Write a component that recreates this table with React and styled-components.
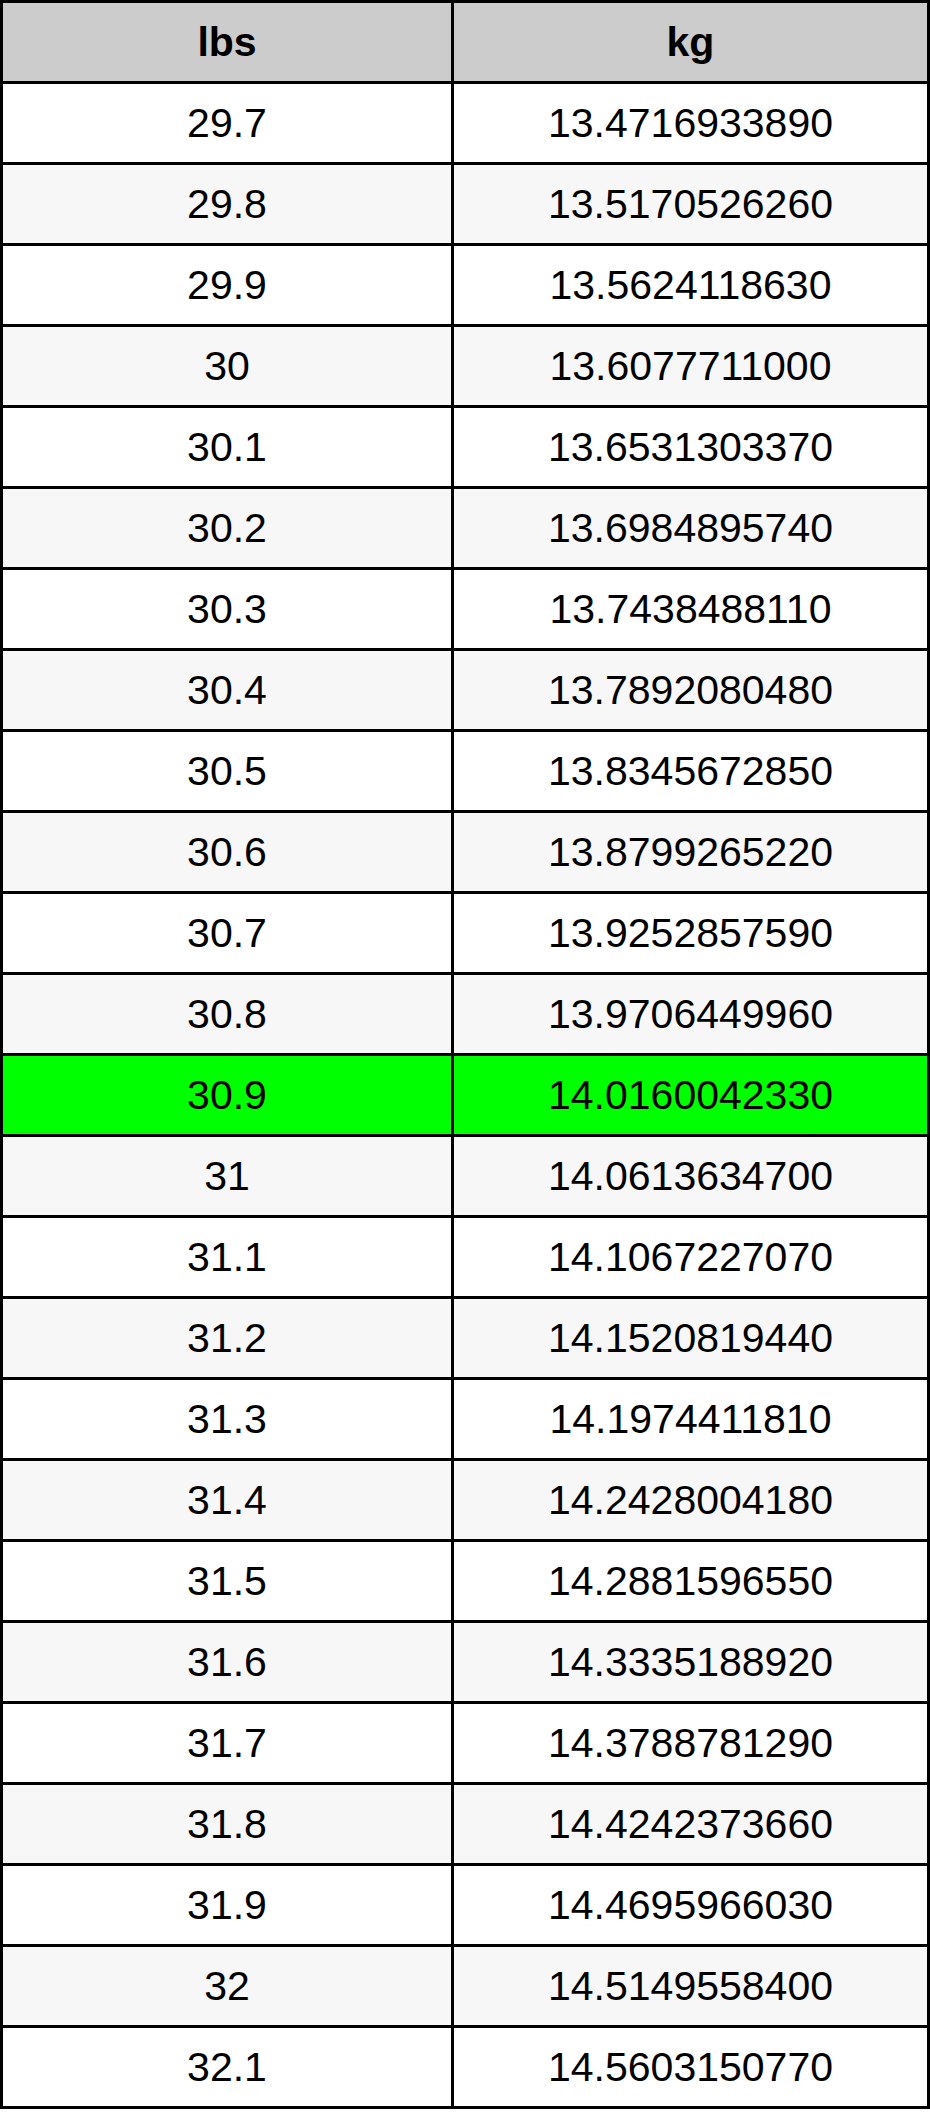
import React from "react";
import styled, { createGlobalStyle } from "styled-components";

const GlobalStyle = createGlobalStyle`
  html, body {
    margin: 0;
    padding: 0;
    background: #fff;
  }
  body {
    font-family: "Liberation Sans", Arial, sans-serif;
  }
`;

const Table = styled.table`
  width: 930px;
  table-layout: fixed;
  border-collapse: separate;
  border-spacing: 0;
  border-top: 3px solid #000;
  border-left: 3px solid #000;
`;

const HeadCell = styled.th`
  width: ${(props) => props.$width}px;
  height: 78px;
  padding: 0;
  background-color: #cccccc;
  border-right: 3px solid #000;
  border-bottom: 3px solid #000;
  font-size: 41px;
  font-weight: bold;
  color: #000;
  text-align: center;
  vertical-align: middle;
`;

const Row = styled.tr`
  background-color: ${(props) =>
    props.$active ? "#00ff00" : props.$odd ? "#f7f7f7" : "#ffffff"};
`;

const Cell = styled.td`
  height: 78px;
  padding: 0;
  border-right: 3px solid #000;
  border-bottom: 3px solid #000;
  font-size: 41px;
  color: #000;
  text-align: center;
  vertical-align: middle;
`;

const rows = [
  ["29.7", "13.4716933890"],
  ["29.8", "13.5170526260"],
  ["29.9", "13.5624118630"],
  ["30", "13.6077711000"],
  ["30.1", "13.6531303370"],
  ["30.2", "13.6984895740"],
  ["30.3", "13.7438488110"],
  ["30.4", "13.7892080480"],
  ["30.5", "13.8345672850"],
  ["30.6", "13.8799265220"],
  ["30.7", "13.9252857590"],
  ["30.8", "13.9706449960"],
  ["30.9", "14.0160042330"],
  ["31", "14.0613634700"],
  ["31.1", "14.1067227070"],
  ["31.2", "14.1520819440"],
  ["31.3", "14.1974411810"],
  ["31.4", "14.2428004180"],
  ["31.5", "14.2881596550"],
  ["31.6", "14.3335188920"],
  ["31.7", "14.3788781290"],
  ["31.8", "14.4242373660"],
  ["31.9", "14.4695966030"],
  ["32", "14.5149558400"],
  ["32.1", "14.5603150770"],
];

export default function App() {
  return (
    <>
      <GlobalStyle />
      <Table>
        <thead>
          <tr>
            <HeadCell $width={448}>lbs</HeadCell>
            <HeadCell $width={473}>kg</HeadCell>
          </tr>
        </thead>
        <tbody>
          {rows.map(([lbs, kg], i) => (
            <Row key={lbs} $odd={i % 2 === 1} $active={lbs === "30.9"}>
              <Cell>{lbs}</Cell>
              <Cell>{kg}</Cell>
            </Row>
          ))}
        </tbody>
      </Table>
    </>
  );
}
